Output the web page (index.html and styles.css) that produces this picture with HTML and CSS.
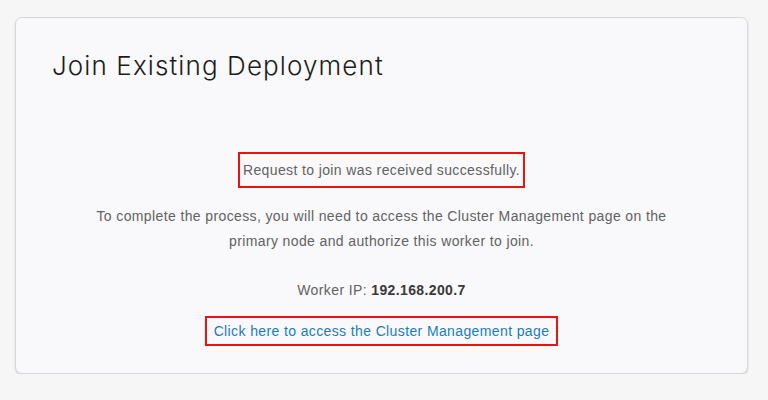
FILE: index.html
```html
<!DOCTYPE html>
<html lang="en">
<head>
  <meta charset="UTF-8" />
  <title>Join Existing Deployment</title>
  <link rel="stylesheet" href="styles.css">
</head>
<body>

<div class="card">
  <h2 class="title">Join Existing Deployment</h2>

  <div class="content">
    <p class="marked">Request to join was received successfully.</p>
    <p class="info">To complete the process, you will need to access the Cluster Management page on the primary node and authorize this worker to join.</p>
    <p class="ip">Worker IP: <b>192.168.200.7</b></p>
    <a class="marked link" href="#">Click here to access the Cluster Management page</a>
  </div>
</div>

</body>
</html>
```

FILE: styles.css
```css
body {
  margin: 0;
  padding: 17px 20px 0 15px;
  background: #f6f6f6;
  font-family: 'Liberation Sans', Arial, sans-serif;
}
.card {
  height: 357px;
  box-sizing: border-box;
  background: #f9f9fb;
  border: 1px solid #d8d8d8;
  border-radius: 7px;
  box-shadow: 0 1px 2px rgba(0,0,0,0.15);
  padding: 30px 36px 0 36px;
}
.title {
  margin: 0;
  font-family: 'Inter', sans-serif;
  font-weight: 300;
  font-size: 26px;
  line-height: 36px;
  letter-spacing: 1.1px;
  color: #1c1c1c;
}
.content {
  display: flex;
  flex-direction: column;
  align-items: center;
  text-align: center;
  color: #626262;
  font-size: 14px;
  letter-spacing: 0.38px;
  margin-top: 68px;
}
.content p {
  margin: 0;
}
.marked {
  border: 2px solid #ee1111;
  padding: 8px 3px;
}
.info {
  max-width: 600px;
  line-height: 25px;
  margin-top: 16px !important;
}
.ip {
  margin-top: 28px !important;
}
.ip b {
  color: #3a3a3a;
}
.link {
  margin-top: 18px;
  padding: 5px 7px;
  color: #1a7dbd;
  text-decoration: none;
}
```
